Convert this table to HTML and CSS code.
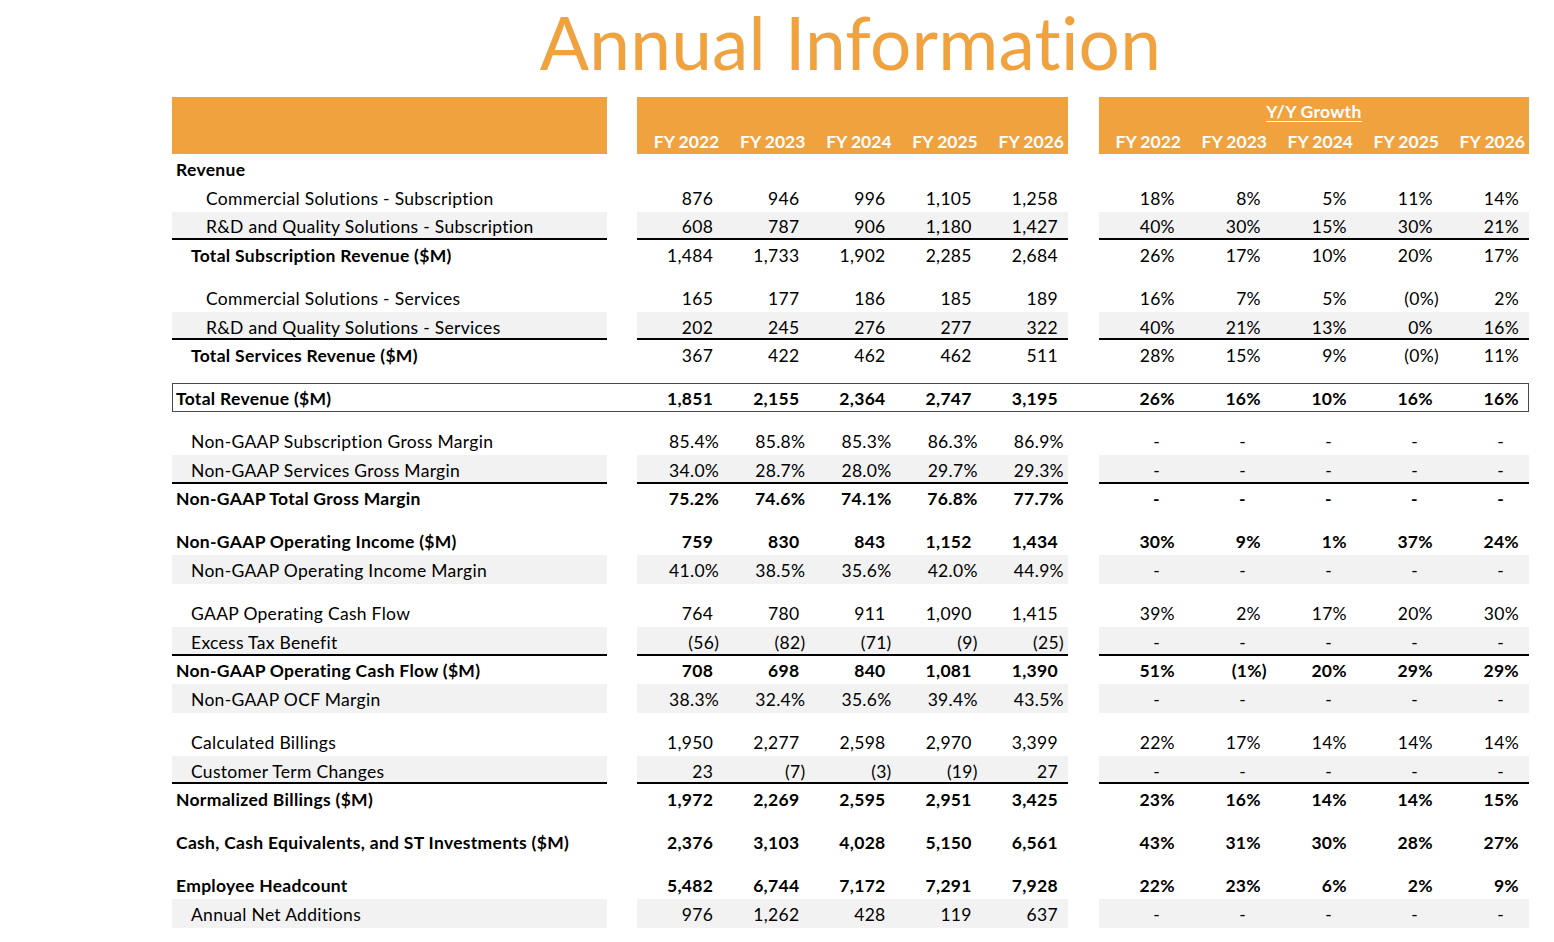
FILE: index.html
```html
<!DOCTYPE html>
<html lang="en">
<head>
<meta charset="utf-8">
<title>Annual Information</title>
<link rel="stylesheet" href="styles.css">
</head>
<body>
<div class="page">
  <h1 class="title">Annual Information</h1>
  <table class="fin">
    <colgroup>
      <col class="c-label"><col class="c-gap1">
      <col class="c-d"><col class="c-d"><col class="c-d"><col class="c-d"><col class="c-d">
      <col class="c-gap2">
      <col class="c-g"><col class="c-g"><col class="c-g"><col class="c-g"><col class="c-g">
    </colgroup>
    <thead>
      <tr>
        <th class="hd" rowspan="2"></th><th class="gap" rowspan="2"></th>
        <th class="hd" colspan="5"></th><th class="gap"></th>
        <th class="hd yy" colspan="5"><span>Y/Y Growth</span></th>
      </tr>
      <tr>
        <th class="hd fy">FY 2022</th><th class="hd fy">FY 2023</th><th class="hd fy">FY 2024</th><th class="hd fy">FY 2025</th><th class="hd fy">FY 2026</th>
        <th class="gap"></th>
        <th class="hd fy">FY 2022</th><th class="hd fy">FY 2023</th><th class="hd fy">FY 2024</th><th class="hd fy">FY 2025</th><th class="hd fy">FY 2026</th>
      </tr>
    </thead>
    <tbody>
      <tr class="r">
        <td class="lb i0 b">Revenue</td><td class="gap"></td>
        <td></td><td></td><td></td><td></td><td></td><td class="gap"></td>
        <td></td><td></td><td></td><td></td><td></td>
      </tr>
      <tr class="r">
        <td class="lb i2">Commercial Solutions - Subscription</td><td class="gap"></td>
        <td class="n">876</td><td class="n">946</td><td class="n">996</td><td class="n">1,105</td><td class="n">1,258</td><td class="gap"></td>
        <td class="n">18%</td><td class="n">8%</td><td class="n">5%</td><td class="n">11%</td><td class="n">14%</td>
      </tr>
      <tr class="r sh ul">
        <td class="lb i2">R&amp;D and Quality Solutions - Subscription</td><td class="gap"></td>
        <td class="n">608</td><td class="n">787</td><td class="n">906</td><td class="n">1,180</td><td class="n">1,427</td><td class="gap"></td>
        <td class="n">40%</td><td class="n">30%</td><td class="n">15%</td><td class="n">30%</td><td class="n">21%</td>
      </tr>
      <tr class="r">
        <td class="lb i1 b">Total Subscription Revenue ($M)</td><td class="gap"></td>
        <td class="n">1,484</td><td class="n">1,733</td><td class="n">1,902</td><td class="n">2,285</td><td class="n">2,684</td><td class="gap"></td>
        <td class="n">26%</td><td class="n">17%</td><td class="n">10%</td><td class="n">20%</td><td class="n">17%</td>
      </tr>
      <tr class="sp"><td colspan="13"></td></tr>
      <tr class="r">
        <td class="lb i2">Commercial Solutions - Services</td><td class="gap"></td>
        <td class="n">165</td><td class="n">177</td><td class="n">186</td><td class="n">185</td><td class="n">189</td><td class="gap"></td>
        <td class="n">16%</td><td class="n">7%</td><td class="n">5%</td><td class="p">(0%)</td><td class="n">2%</td>
      </tr>
      <tr class="r sh ul">
        <td class="lb i2">R&amp;D and Quality Solutions - Services</td><td class="gap"></td>
        <td class="n">202</td><td class="n">245</td><td class="n">276</td><td class="n">277</td><td class="n">322</td><td class="gap"></td>
        <td class="n">40%</td><td class="n">21%</td><td class="n">13%</td><td class="n">0%</td><td class="n">16%</td>
      </tr>
      <tr class="r">
        <td class="lb i1 b">Total Services Revenue ($M)</td><td class="gap"></td>
        <td class="n">367</td><td class="n">422</td><td class="n">462</td><td class="n">462</td><td class="n">511</td><td class="gap"></td>
        <td class="n">28%</td><td class="n">15%</td><td class="n">9%</td><td class="p">(0%)</td><td class="n">11%</td>
      </tr>
      <tr class="sp"><td colspan="13"></td></tr>
      <tr class="r box b">
        <td class="lb i0">Total Revenue ($M)</td><td class="gap"></td>
        <td class="n">1,851</td><td class="n">2,155</td><td class="n">2,364</td><td class="n">2,747</td><td class="n">3,195</td><td class="gap"></td>
        <td class="n">26%</td><td class="n">16%</td><td class="n">10%</td><td class="n">16%</td><td class="n last">16%</td>
      </tr>
      <tr class="sp"><td colspan="13"></td></tr>
      <tr class="r">
        <td class="lb i1">Non-GAAP Subscription Gross Margin</td><td class="gap"></td>
        <td class="p">85.4%</td><td class="p">85.8%</td><td class="p">85.3%</td><td class="p">86.3%</td><td class="p">86.9%</td><td class="gap"></td>
        <td class="d">-</td><td class="d">-</td><td class="d">-</td><td class="d">-</td><td class="d">-</td>
      </tr>
      <tr class="r sh ul">
        <td class="lb i1">Non-GAAP Services Gross Margin</td><td class="gap"></td>
        <td class="p">34.0%</td><td class="p">28.7%</td><td class="p">28.0%</td><td class="p">29.7%</td><td class="p">29.3%</td><td class="gap"></td>
        <td class="d">-</td><td class="d">-</td><td class="d">-</td><td class="d">-</td><td class="d">-</td>
      </tr>
      <tr class="r b">
        <td class="lb i0">Non-GAAP Total Gross Margin</td><td class="gap"></td>
        <td class="p">75.2%</td><td class="p">74.6%</td><td class="p">74.1%</td><td class="p">76.8%</td><td class="p">77.7%</td><td class="gap"></td>
        <td class="d">-</td><td class="d">-</td><td class="d">-</td><td class="d">-</td><td class="d">-</td>
      </tr>
      <tr class="sp"><td colspan="13"></td></tr>
      <tr class="r b">
        <td class="lb i0">Non-GAAP Operating Income ($M)</td><td class="gap"></td>
        <td class="n">759</td><td class="n">830</td><td class="n">843</td><td class="n">1,152</td><td class="n">1,434</td><td class="gap"></td>
        <td class="n">30%</td><td class="n">9%</td><td class="n">1%</td><td class="n">37%</td><td class="n">24%</td>
      </tr>
      <tr class="r sh">
        <td class="lb i1">Non-GAAP Operating Income Margin</td><td class="gap"></td>
        <td class="p">41.0%</td><td class="p">38.5%</td><td class="p">35.6%</td><td class="p">42.0%</td><td class="p">44.9%</td><td class="gap"></td>
        <td class="d">-</td><td class="d">-</td><td class="d">-</td><td class="d">-</td><td class="d">-</td>
      </tr>
      <tr class="sp"><td colspan="13"></td></tr>
      <tr class="r">
        <td class="lb i1">GAAP Operating Cash Flow</td><td class="gap"></td>
        <td class="n">764</td><td class="n">780</td><td class="n">911</td><td class="n">1,090</td><td class="n">1,415</td><td class="gap"></td>
        <td class="n">39%</td><td class="n">2%</td><td class="n">17%</td><td class="n">20%</td><td class="n">30%</td>
      </tr>
      <tr class="r sh ul">
        <td class="lb i1">Excess Tax Benefit</td><td class="gap"></td>
        <td class="p">(56)</td><td class="p">(82)</td><td class="p">(71)</td><td class="p">(9)</td><td class="p">(25)</td><td class="gap"></td>
        <td class="d">-</td><td class="d">-</td><td class="d">-</td><td class="d">-</td><td class="d">-</td>
      </tr>
      <tr class="r b">
        <td class="lb i0">Non-GAAP Operating Cash Flow ($M)</td><td class="gap"></td>
        <td class="n">708</td><td class="n">698</td><td class="n">840</td><td class="n">1,081</td><td class="n">1,390</td><td class="gap"></td>
        <td class="n">51%</td><td class="p">(1%)</td><td class="n">20%</td><td class="n">29%</td><td class="n">29%</td>
      </tr>
      <tr class="r sh">
        <td class="lb i1">Non-GAAP OCF Margin</td><td class="gap"></td>
        <td class="p">38.3%</td><td class="p">32.4%</td><td class="p">35.6%</td><td class="p">39.4%</td><td class="p">43.5%</td><td class="gap"></td>
        <td class="d">-</td><td class="d">-</td><td class="d">-</td><td class="d">-</td><td class="d">-</td>
      </tr>
      <tr class="sp"><td colspan="13"></td></tr>
      <tr class="r">
        <td class="lb i1">Calculated Billings</td><td class="gap"></td>
        <td class="n">1,950</td><td class="n">2,277</td><td class="n">2,598</td><td class="n">2,970</td><td class="n">3,399</td><td class="gap"></td>
        <td class="n">22%</td><td class="n">17%</td><td class="n">14%</td><td class="n">14%</td><td class="n">14%</td>
      </tr>
      <tr class="r sh ul">
        <td class="lb i1">Customer Term Changes</td><td class="gap"></td>
        <td class="n">23</td><td class="p">(7)</td><td class="p">(3)</td><td class="p">(19)</td><td class="n">27</td><td class="gap"></td>
        <td class="d">-</td><td class="d">-</td><td class="d">-</td><td class="d">-</td><td class="d">-</td>
      </tr>
      <tr class="r b">
        <td class="lb i0">Normalized Billings ($M)</td><td class="gap"></td>
        <td class="n">1,972</td><td class="n">2,269</td><td class="n">2,595</td><td class="n">2,951</td><td class="n">3,425</td><td class="gap"></td>
        <td class="n">23%</td><td class="n">16%</td><td class="n">14%</td><td class="n">14%</td><td class="n">15%</td>
      </tr>
      <tr class="sp"><td colspan="13"></td></tr>
      <tr class="r b">
        <td class="lb i0">Cash, Cash Equivalents, and ST Investments ($M)</td><td class="gap"></td>
        <td class="n">2,376</td><td class="n">3,103</td><td class="n">4,028</td><td class="n">5,150</td><td class="n">6,561</td><td class="gap"></td>
        <td class="n">43%</td><td class="n">31%</td><td class="n">30%</td><td class="n">28%</td><td class="n">27%</td>
      </tr>
      <tr class="sp"><td colspan="13"></td></tr>
      <tr class="r b">
        <td class="lb i0">Employee Headcount</td><td class="gap"></td>
        <td class="n">5,482</td><td class="n">6,744</td><td class="n">7,172</td><td class="n">7,291</td><td class="n">7,928</td><td class="gap"></td>
        <td class="n">22%</td><td class="n">23%</td><td class="n">6%</td><td class="n">2%</td><td class="n">9%</td>
      </tr>
      <tr class="r sh">
        <td class="lb i1">Annual Net Additions</td><td class="gap"></td>
        <td class="n">976</td><td class="n">1,262</td><td class="n">428</td><td class="n">119</td><td class="n">637</td><td class="gap"></td>
        <td class="d">-</td><td class="d">-</td><td class="d">-</td><td class="d">-</td><td class="d">-</td>
      </tr>
    </tbody>
  </table>
</div>
</body>
</html>
```

FILE: styles.css
```css
* { box-sizing: border-box; }

html, body {
  margin: 0;
  padding: 0;
  background: #ffffff;
}

body {
  font-family: Lato, "Open Sans", "Liberation Sans", sans-serif;
  color: #000000;
  font-variant-ligatures: none;
}

.page {
  width: 1357px;
  margin-left: 172px;
}

.title {
  margin: 0;
  padding-top: 0;
  height: 97px;
  font-family: Lato, "Open Sans", sans-serif;
  font-weight: 400;
  font-size: 73px;
  line-height: 84px;
  text-align: center;
  color: #f0a23f;
  letter-spacing: 0.2px;
  font-variant-ligatures: none;
}

.fin {
  table-layout: fixed;
  border-collapse: separate;
  border-spacing: 0;
  width: 1357px;
  font-size: 17.5px;
  letter-spacing: 0.3px;
}

.c-label { width: 435px; }
.c-gap1 { width: 30px; }
.c-d { width: 86.2px; }
.c-gap2 { width: 31px; }
.c-g { width: 86px; }

.fin th,
.fin td {
  padding: 3px 0 0 0;
  height: 28.65px;
  line-height: 20px;
  white-space: nowrap;
  vertical-align: middle;
  font-weight: 400;
}

.fin th.hd {
  background: #f0a23f;
  color: #ffffff;
  font-weight: 700;
  text-align: right;
  letter-spacing: 0;
}

.fin th.fy {
  padding-right: 4px;
  padding-top: 4px;
}

.fin th.yy {
  text-align: center;
  padding-top: 2px;
  letter-spacing: 0.3px;
}

.fin th.yy span {
  text-decoration: underline;
  text-underline-offset: 3px;
  text-decoration-thickness: 1px;
}

.fin .gap {
  background: transparent !important;
  box-shadow: none !important;
}

.lb { text-align: left; }
.i0 { padding-left: 4px !important; }
.i1 { padding-left: 19px !important; }
.i2 { padding-left: 34px !important; }

.n { text-align: right; padding-right: 10px !important; }
.p { text-align: right; padding-right: 4px !important; }
.d { text-align: right; padding-right: 25px !important; }

.b td,
td.b { font-weight: 700; }

.sh td { background: #f2f2f2; }

.ul td { box-shadow: inset 0 -2px 0 #000000; }

.sp td { height: 14.33px; padding: 0; line-height: 0; }

.box td {
  box-shadow: inset 0 1px 0 #4a4a4a, inset 0 -1px 0 #4a4a4a;
}

.box td.gap {
  box-shadow: inset 0 1px 0 #4a4a4a, inset 0 -1px 0 #4a4a4a !important;
}

.box td.lb {
  box-shadow: inset 1px 0 0 #4a4a4a, inset 0 1px 0 #4a4a4a, inset 0 -1px 0 #4a4a4a;
}

.box td.last {
  box-shadow: inset -1px 0 0 #4a4a4a, inset 0 1px 0 #4a4a4a, inset 0 -1px 0 #4a4a4a;
}
```
